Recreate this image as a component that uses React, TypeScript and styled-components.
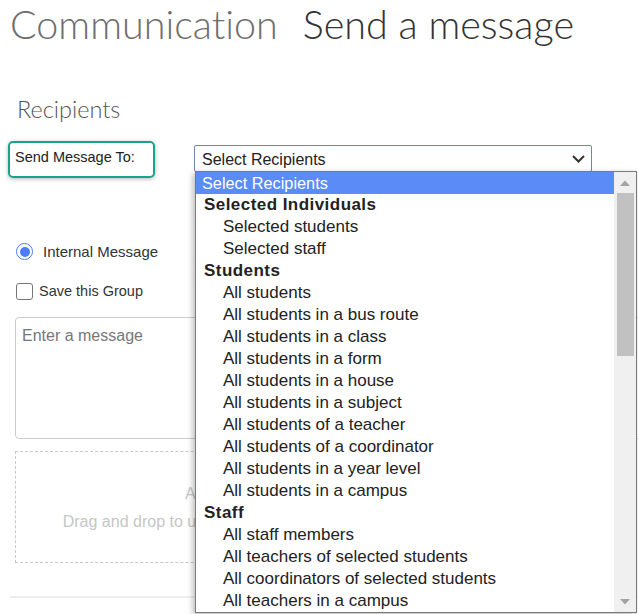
import React from "react";
import styled, { createGlobalStyle } from "styled-components";

const Global = createGlobalStyle`
  html, body { margin: 0; padding: 0; overflow: hidden; background: #fff; }
  body { font-family: "Liberation Sans", Arial, sans-serif; color: #222; }
  * { box-sizing: border-box; }
`;

const Page = styled.div`
  position: relative;
  width: 700px;
  height: 614px;
  padding-left: 10px;
  display: flex;
  flex-direction: column;
`;

const Title = styled.h1`
  margin: 1px 0 0 0;
  font-family: Lato, "Open Sans", sans-serif;
  font-weight: 300;
  font-size: 39.5px;
  line-height: 46px;
  font-variant-ligatures: none;
  display: flex;
  gap: 25px;
`;

const TitlePart = styled.span<{ $muted?: boolean }>`
  color: ${(p) => (p.$muted ? "#6e6e6e" : "#333")};
`;

const SectionHeading = styled.h2`
  margin: 49px 0 0 7px;
  font-family: Lato, "Open Sans", sans-serif;
  font-weight: 300;
  font-size: 23.5px;
  line-height: 26px;
  font-variant-ligatures: none;
  color: #555;
`;

const FormRow = styled.div`
  margin-top: 19px;
  display: flex;
  align-items: flex-start;
`;

const LabelBox = styled.div`
  margin-left: -2px;
  width: 147px;
  height: 37px;
  border: 2px solid #17a488;
  border-radius: 5px;
  box-shadow: 0 1px 4px rgba(0, 0, 0, 0.3);
  padding: 5px 0 0 5px;
  font-size: 14.5px;
  line-height: 18px;
  color: #222;
`;

const SelectWrap = styled.div`
  position: relative;
  margin: 4px 0 0 39px;
`;

const SelectBox = styled.div`
  width: 398px;
  height: 27px;
  border: 1px solid #6d88aa;
  border-radius: 2px;
  padding: 3px 0 0 7px;
  font-size: 16px;
  line-height: 21px;
  color: #222;
  display: flex;
  justify-content: space-between;
`;

const Chevron = styled.svg`
  margin: 6px 6px 0 0;
`;

const DropList = styled.div`
  position: absolute;
  top: 26px;
  left: 1px;
  width: 442px;
  height: 442px;
  border: 1px solid #7a7a7a;
  background: #fff;
  box-shadow: -2px 2px 6px rgba(0, 0, 0, 0.28);
  display: flex;
  z-index: 10;
`;

const Options = styled.div`
  flex: 1;
  overflow: hidden;
`;

const Option = styled.div<{ $kind: "selected" | "group" | "item" }>`
  height: 22px;
  line-height: 22px;
  font-size: ${(p) => (p.$kind === "selected" ? "16.3px" : "17px")};
  white-space: nowrap;
  padding-left: ${(p) =>
    p.$kind === "selected" ? "6px" : p.$kind === "group" ? "8px" : "27px"};
  font-weight: ${(p) => (p.$kind === "group" ? 700 : 400)};
  letter-spacing: ${(p) => (p.$kind === "group" ? "0.45px" : "0")};
  background: ${(p) => (p.$kind === "selected" ? "#5b8bf7" : "transparent")};
  color: ${(p) => (p.$kind === "selected" ? "#fff" : "#222")};
`;

const ScrollBar = styled.div`
  width: 22px;
  background: #f0f0f0;
  display: flex;
  flex-direction: column;
  align-items: center;
`;

const ScrollArrow = styled.div<{ $down?: boolean }>`
  height: 21px;
  width: 100%;
  display: flex;
  align-items: center;
  justify-content: center;
  ${(p) => (p.$down ? "margin-top: auto;" : "")}
`;

const Thumb = styled.div`
  width: 17px;
  height: 163px;
  background: #c1c1c1;
`;

const Arrow = ({ down }: { down?: boolean }) => (
  <svg width="10" height="6" viewBox="0 0 10 6">
    {down ? (
      <polygon points="0,0 10,0 5,5.5" fill="#a3a3a3" />
    ) : (
      <polygon points="0,6 10,6 5,0.5" fill="#a3a3a3" />
    )}
  </svg>
);

const ChoiceRow = styled.label<{ $gap: number; $top: number }>`
  margin: ${(p) => p.$top}px 0 0 6px;
  display: flex;
  align-items: center;
  height: 17px;
  gap: ${(p) => p.$gap}px;
  line-height: 17px;
  color: #333;
`;

const Radio = styled.span`
  width: 17px;
  height: 17px;
  border-radius: 50%;
  border: 1.5px solid #4c7cf6;
  display: flex;
  align-items: center;
  justify-content: center;
  &::after {
    content: "";
    width: 10px;
    height: 10px;
    border-radius: 50%;
    background: #4c7cf6;
  }
`;

const Check = styled.span`
  width: 17px;
  height: 17px;
  border-radius: 3px;
  border: 1.5px solid #767676;
  background: #fff;
`;

const ChoiceText = styled.span<{ $size: number }>`
  font-size: ${(p) => p.$size}px;
`;

const MessageBox = styled.textarea`
  margin: 17px 0 0 5px;
  width: 680px;
  height: 122px;
  border: 1px solid #cccccc;
  border-radius: 4px;
  padding: 8px 6px;
  font-family: "Liberation Sans", Arial, sans-serif;
  font-size: 16px;
  line-height: 20px;
  resize: none;
  outline: none;
  &::placeholder {
    color: #777;
  }
`;

const DropZone = styled.div`
  margin: 12px 0 0 5px;
  width: 429px;
  height: 112px;
  border: 1px dashed #c8c8c8;
  padding-top: 28px;
  text-align: center;
  color: #c6c6c6;
  font-size: 16px;
  line-height: 28px;
`;

const Divider = styled.div`
  margin-top: 33px;
  height: 2px;
  background: #eeeeee;
  width: 680px;
`;

type Opt = { label: string; kind: "selected" | "group" | "item" };

const options: Opt[] = [
  { label: "Select Recipients", kind: "selected" },
  { label: "Selected Individuals", kind: "group" },
  { label: "Selected students", kind: "item" },
  { label: "Selected staff", kind: "item" },
  { label: "Students", kind: "group" },
  { label: "All students", kind: "item" },
  { label: "All students in a bus route", kind: "item" },
  { label: "All students in a class", kind: "item" },
  { label: "All students in a form", kind: "item" },
  { label: "All students in a house", kind: "item" },
  { label: "All students in a subject", kind: "item" },
  { label: "All students of a teacher", kind: "item" },
  { label: "All students of a coordinator", kind: "item" },
  { label: "All students in a year level", kind: "item" },
  { label: "All students in a campus", kind: "item" },
  { label: "Staff", kind: "group" },
  { label: "All staff members", kind: "item" },
  { label: "All teachers of selected students", kind: "item" },
  { label: "All coordinators of selected students", kind: "item" },
  { label: "All teachers in a campus", kind: "item" },
];

export default function App() {
  return (
    <>
      <Global />
      <Page>
        <Title>
          <TitlePart $muted>Communication</TitlePart>
          <TitlePart>Send a message</TitlePart>
        </Title>
        <SectionHeading>Recipients</SectionHeading>
        <FormRow>
          <LabelBox>Send Message To:</LabelBox>
          <SelectWrap>
            <SelectBox>
              <span>Select Recipients</span>
              <Chevron width="13" height="8" viewBox="0 0 13 8">
                <polyline
                  points="1,1 6.5,6.5 12,1"
                  fill="none"
                  stroke="#333"
                  strokeWidth="2"
                />
              </Chevron>
            </SelectBox>
            <DropList>
              <Options>
                {options.map((o) => (
                  <Option key={o.label} $kind={o.kind}>
                    {o.label}
                  </Option>
                ))}
              </Options>
              <ScrollBar>
                <ScrollArrow>
                  <Arrow />
                </ScrollArrow>
                <Thumb />
                <ScrollArrow $down>
                  <Arrow down />
                </ScrollArrow>
              </ScrollBar>
            </DropList>
          </SelectWrap>
        </FormRow>
        <ChoiceRow $gap={10} $top={65}>
          <Radio />
          <ChoiceText $size={15}>Internal Message</ChoiceText>
        </ChoiceRow>
        <ChoiceRow $gap={6} $top={23}>
          <Check />
          <ChoiceText $size={14.5}>Save this Group</ChoiceText>
        </ChoiceRow>
        <MessageBox placeholder="Enter a message" />
        <DropZone>
          <div>Attachments</div>
          <div>Drag and drop to upload files or click to browse</div>
        </DropZone>
        <Divider />
      </Page>
    </>
  );
}
